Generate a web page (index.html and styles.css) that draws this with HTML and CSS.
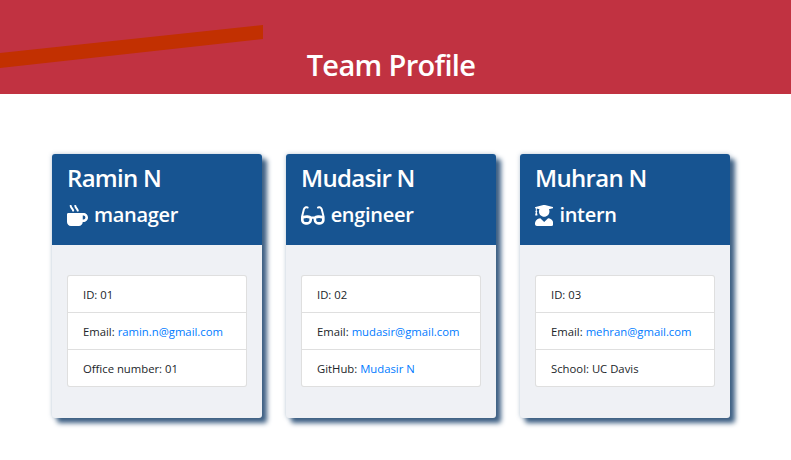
FILE: index.html
```html
<!DOCTYPE html>
<html lang="en">
<head>
<meta charset="utf-8">
<title>Team Profile</title>
<link rel="stylesheet" href="styles.css">
</head>
<body>
<header class="banner">
  <svg class="slash" viewBox="0 0 263 43" width="263" height="43" aria-hidden="true"><polygon points="0,28 263,0 263,14 0,43"/></svg>
  <h1 class="banner-title">Team Profile</h1>
</header>
<main class="team">
  <article class="card">
    <div class="card-head">
      <h2 class="name">Ramin N</h2>
      <h3 class="role"><svg class="icon" viewBox="0 0 512 512"><path d="M127.1 146.5c1.3 7.7 8 13.5 16 13.5h16.5c9.8 0 17.6-8.5 16.3-18-3.8-28.2-16.4-54.2-36.6-74.7-14.4-14.7-23.6-33.3-26.4-53.5C111.8 5.9 105 0 96.8 0H80.4C70.6 0 63 8.5 64.1 18c3.9 31.9 18 61.3 40.6 84.4 12 12.2 19.7 27.5 22.4 44.1zm112 0c1.3 7.7 8 13.5 16 13.5h16.5c9.8 0 17.6-8.5 16.3-18-3.8-28.2-16.4-54.2-36.6-74.7-14.4-14.7-23.6-33.3-26.4-53.5C223.8 5.9 217 0 208.8 0h-16.4c-9.8 0-17.5 8.5-16.3 18 3.9 31.9 18 61.3 40.6 84.4 12 12.2 19.7 27.5 22.4 44.1zM400 192H32c-17.7 0-32 14.3-32 32v192c0 53 43 96 96 96h192c53 0 96-43 96-96h16c61.8 0 112-50.2 112-112s-50.2-112-112-112zm0 160h-16v-96h16c26.5 0 48 21.5 48 48s-21.5 48-48 48z"/></svg>manager</h3>
    </div>
    <div class="card-body">
      <ul class="facts">
        <li class="fact">ID: 01</li>
        <li class="fact">Email: <a class="link" href="#">ramin.n@gmail.com</a></li>
        <li class="fact">Office number: 01</li>
      </ul>
    </div>
  </article>
  <article class="card">
    <div class="card-head">
      <h2 class="name">Mudasir N</h2>
      <h3 class="role"><svg class="icon" viewBox="0 0 576 512"><path d="M574.1 280.37L528.75 98.66c-5.91-23.7-21.59-44.05-43-55.81-21.44-11.73-46.97-14.11-70.19-6.33l-15.25 5.08c-8.39 2.79-12.92 11.86-10.12 20.24l5.06 15.18c2.79 8.38 11.85 12.91 20.23 10.12l13.18-4.39c10.87-3.62 23-3.57 33.16 1.73 10.29 5.37 17.57 14.56 20.37 25.82l38.46 153.82c-22.19-6.81-49.79-12.46-81.2-12.46-34.77 0-73.98 7.02-114.85 26.74h-73.18c-40.87-19.74-80.08-26.75-114.86-26.75-31.42 0-59.02 5.65-81.21 12.46l38.46-153.83c2.79-11.25 10.09-20.45 20.38-25.81 10.16-5.3 22.28-5.35 33.15-1.73l13.17 4.39c8.38 2.79 17.44-1.74 20.23-10.12l5.06-15.18c2.8-8.38-1.73-17.45-10.12-20.24l-15.25-5.08c-23.22-7.78-48.75-5.41-70.19 6.33-21.41 11.77-37.09 32.11-43 55.8L1.9 280.37A64.218 64.218 0 0 0 0 295.86v70.25C0 429.01 51.58 480 115.2 480h37.12c60.28 0 110.37-45.94 114.88-105.37l2.93-38.63h35.75l2.93 38.63C313.31 434.06 363.4 480 423.68 480h37.12c63.62 0 115.2-50.99 115.2-113.88v-70.25c0-5.23-.64-10.43-1.9-15.5zm-370.72 89.42c-1.97 25.91-24.4 46.21-51.06 46.21H115.2C86.97 416 64 393.62 64 366.11v-37.54c18.12-6.49 43.42-12.57 72.73-12.57 23.86 0 47.26 4.33 69.93 12.4l-3.29 41.79zM512 366.12c0 27.51-22.97 49.88-51.2 49.88h-37.12c-26.67 0-49.1-20.3-51.06-46.21l-3.29-41.79c22.67-8.07 46.07-12.4 69.93-12.4 29.31 0 54.61 6.08 72.73 12.57v37.95z"/></svg>engineer</h3>
    </div>
    <div class="card-body">
      <ul class="facts">
        <li class="fact">ID: 02</li>
        <li class="fact">Email: <a class="link" href="#">mudasir@gmail.com</a></li>
        <li class="fact">GitHub: <a class="link" href="#">Mudasir N</a></li>
      </ul>
    </div>
  </article>
  <article class="card">
    <div class="card-head">
      <h2 class="name">Muhran N</h2>
      <h3 class="role"><svg class="icon" viewBox="0 0 448 512"><path d="M319.4 320.6L224 416l-95.4-95.4C57.1 323.7 0 382.2 0 454.4v9.6c0 26.5 21.5 48 48 48h352c26.5 0 48-21.5 48-48v-9.6c0-72.2-57.1-130.7-128.6-133.8zM13.6 79.8l6.4 1.5v58.4c-7 4.2-12 11.5-12 20.3 0 8.4 4.6 15.4 11.1 19.7L3.5 242c-1.7 6.9 2.1 14 7.6 14h41.8c5.5 0 9.3-7.1 7.6-14l-15.6-62.3C51.4 175.4 56 168.4 56 160c0-8.8-5-16.1-12-20.3V87.1l66 15.9c-8.6 17.2-14 36.4-14 57 0 70.7 57.3 128 128 128s128-57.3 128-128c0-20.6-5.3-39.8-14-57l96.3-23.2c18.2-4.4 18.2-27.1 0-31.5l-190.4-46c-13-3.1-26.7-3.1-39.7 0L13.6 48.2c-18.1 4.4-18.1 27.2 0 31.6z"/></svg>intern</h3>
    </div>
    <div class="card-body">
      <ul class="facts">
        <li class="fact">ID: 03</li>
        <li class="fact">Email: <a class="link" href="#">mehran@gmail.com</a></li>
        <li class="fact">School: UC Davis</li>
      </ul>
    </div>
  </article>
</main>
</body>
</html>
```
FILE: styles.css
```css
* { box-sizing: border-box; }
html, body { margin: 0; padding: 0; }
body {
  background: #fff;
  color: #212529;
  font-family: "Open Sans", "Noto Sans", sans-serif;
  font-size: 12px;
  line-height: 1.5;
  min-height: 460px;
}
.banner {
  position: relative;
  height: 94px;
  background: #c13241;
  display: flex;
  justify-content: center;
  padding: 43px 9px 0 0;
}
.slash { position: absolute; left: 0; top: 25px; fill: #c23001; }
.banner-title {
  margin: 0;
  color: #fff;
  font-size: 29px;
  font-weight: 600;
  letter-spacing: -.65px;
  line-height: 44px;
  height: 44px;
}
.team {
  display: flex;
  gap: 24px;
  padding: 60px 0 30px 52px;
}
.card {
  width: 210px;
  height: 264px;
  background: #eff1f5;
  border-radius: 3px;
  box-shadow: 5px 5px 5px #3d5f83, 0 0 4px rgba(61, 95, 131, .35);
  overflow: hidden;
}
.card-head {
  height: 91px;
  background: #175491;
  color: #fff;
  padding: 9px 15px;
}
.name { margin: 0 0 8px; font-size: 24px; font-weight: 600; letter-spacing: -.7px; line-height: 30px; }
.role {
  margin: 0;
  display: flex;
  align-items: center;
  gap: 6px;
  font-size: 20px;
  font-weight: 600;
  letter-spacing: -.3px;
  line-height: 28px;
}
.icon { height: 21px; width: auto; fill: #fff; flex: none; }
.card-body { padding: 30px 15px; }
.facts {
  list-style: none;
  margin: 0;
  padding: 0;
  background: #fff;
  border: 1px solid rgba(0, 0, 0, .125);
  border-radius: 3px;
}
.fact { height: 37px; padding: 10px 15px 8px; font-size: 11.3px; line-height: 18px; white-space: nowrap; color: #212529; }
.fact + .fact { border-top: 1px solid rgba(0, 0, 0, .125); }
.fact:first-child { height: 36px; }
.link { color: #007bff; text-decoration: none; }
```
